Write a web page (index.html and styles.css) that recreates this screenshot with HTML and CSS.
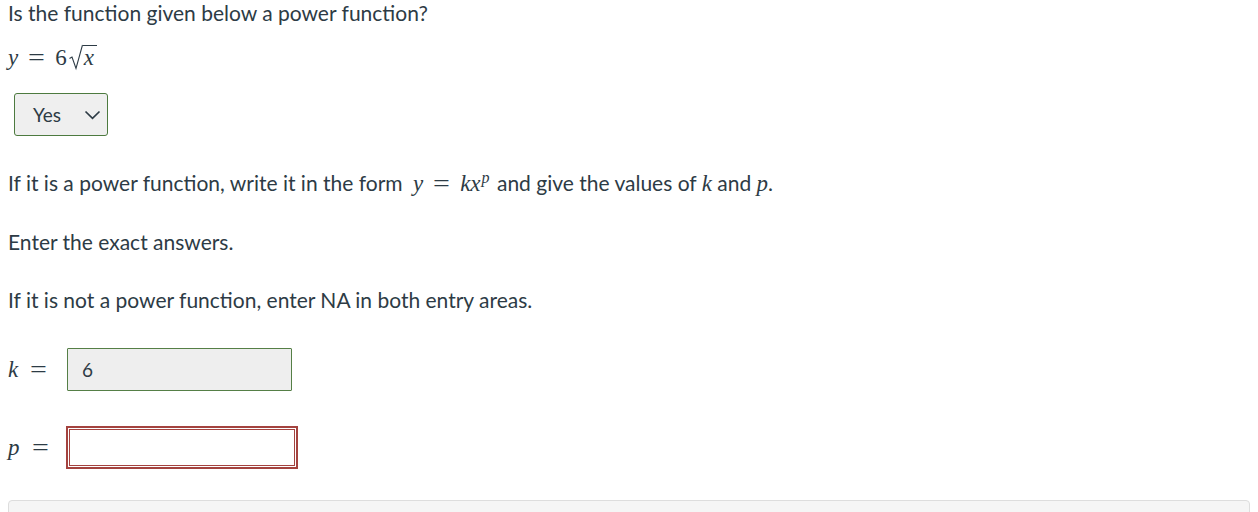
FILE: index.html
```html
<!DOCTYPE html>
<html>
<head>
<meta charset="utf-8">
<link rel="stylesheet" href="styles.css">
</head>
<body>
<div class="page">
  <p class="line first">Is the function given below a power function?</p>
  <p class="line math-line"><span class="m"><i>y</i><span class="eq">=</span>6<span class="sqrt"><svg class="radsvg" width="14" height="27" viewBox="0 0 14 27"><path d="M0.5 14.5 L3 13 L7 24.5 L13.5 1" fill="none" stroke="#2d3b45" stroke-width="1.1"/></svg><span class="under"><i>x</i></span></span></span></p>
  <div class="select"><span class="sel-text">Yes</span><svg class="chev" width="17" height="10" viewBox="0 0 17 10"><path d="M1.5 1.5 L8.5 8.3 L15.5 1.5" fill="none" stroke="#2d3b45" stroke-width="1.7"/></svg></div>
  <p class="line para p1">If it is a power function, write it in the form <span class="m im"><i>y</i><span class="eq">=</span><i>kx</i><sup><i>p</i></sup></span> and give the values of <span class="m"><i>k</i></span> and <span class="m"><i>p</i></span>.</p>
  <p class="line para">Enter the exact answers.</p>
  <p class="line para">If it is not a power function, enter NA in both entry areas.</p>
  <div class="row krow"><span class="m lbl"><i>k</i><span class="eq">=</span></span><div class="inp ok">6</div></div>
  <div class="row prow"><span class="m lbl"><i>p</i><span class="eq">=</span></span><div class="inp bad"></div></div>
  <div class="footer"></div>
</div>
</body>
</html>
```
FILE: styles.css
```css
html, body { margin: 0; padding: 0; background: #fff; }
body { font-family: Lato, "Open Sans", sans-serif; color: #2d3b45; font-size: 21px; }
.page { padding: 0 8px; overflow: hidden; height: 512px; box-sizing: border-box; }
.line { margin: 0; line-height: 28px; white-space: nowrap; }
.first { margin-top: -1px; }
.math-line { margin-top: 16px; }
.m { font-family: "Liberation Serif", "DejaVu Serif", serif; font-size: 23px; }
.m i { font-style: italic; }
.im { margin-left: 5px; }
.eq { display: inline-block; transform: scaleX(1.3); margin: 0 12px 0 12px; }
.sqrt { display: inline-flex; align-items: flex-start; vertical-align: -6px; margin-left: 2px; }
.radsvg { display: block; }
.under { border-top: 1.2px solid #2d3b45; padding: 0 3px 0 1px; line-height: 23px; display: block; margin-top: 1px; }
sup { font-size: 16px; vertical-align: 8px; line-height: 0; margin-left: 1px; margin-right: 2px; }
.select { margin: 21px 0 0 6px; width: 94px; height: 43px; box-sizing: border-box; border: 1px solid #4d7a3f; border-radius: 3px; background: #efefef; display: flex; align-items: center; }
.sel-text { margin-left: 18px; font-size: 19px; }
.chev { margin-left: 23px; }
.para { margin-top: 30px; }
.p1 { margin-top: 33px; }
.row { display: flex; align-items: center; }
.krow { margin-top: 34px; }
.prow { margin-top: 35px; }
.lbl { display: flex; align-items: center; }
.krow .lbl { width: 59px; }
.prow .lbl { width: 58px; }
.lbl .eq { margin-left: 14px; }
.inp { box-sizing: border-box; height: 43px; display: flex; align-items: center; font-size: 19px; }
.inp.ok { width: 225px; border: 1px solid #557f46; background: #eee; padding-left: 14px; border-radius: 1px; }
.inp.bad { width: 232px; border: 2px solid #a4433f; box-shadow: inset 0 0 0 1px #fff, inset 0 0 0 2px #a4433f; background: #fff; }
.footer { margin-top: 31px; height: 40px; border: 1px solid #ddd; border-radius: 4px; background: #f5f5f5; }
```
